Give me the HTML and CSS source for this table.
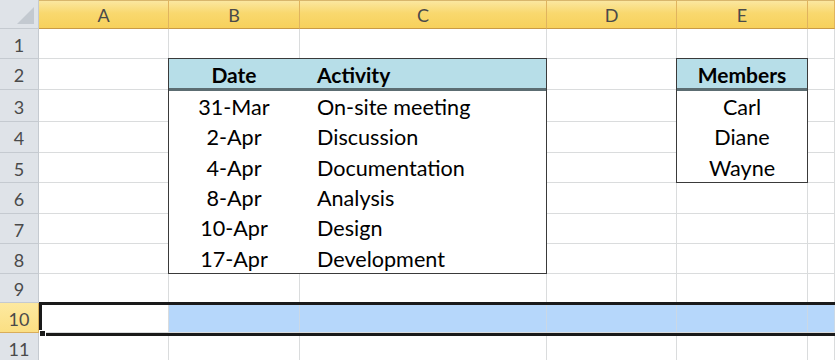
FILE: index.html
```html
<!DOCTYPE html>
<html>
<head>
<meta charset="utf-8">
<link rel="stylesheet" href="styles.css">
</head>
<body>
<div class="sheet">
  <div class="corner"><svg width="38" height="28" viewBox="0 0 38 28"><polygon points="17,24 34,24 34,7" fill="#c3c9d0"/></svg></div>
  <div class="colhead">A</div>
  <div class="colhead">B</div>
  <div class="colhead">C</div>
  <div class="colhead">D</div>
  <div class="colhead">E</div>
  <div class="colhead"></div>

  <div class="rowhead">1</div>
  <div class="cell"></div><div class="cell"></div><div class="cell"></div><div class="cell"></div><div class="cell"></div><div class="cell"></div>

  <div class="rowhead">2</div>
  <div class="cell"></div><div class="cell"></div><div class="cell"></div>

  <div class="rowhead">3</div>
  <div class="cell"></div><div class="cell"></div><div class="cell"></div>

  <div class="rowhead">4</div>
  <div class="cell"></div><div class="cell"></div><div class="cell"></div>

  <div class="rowhead">5</div>
  <div class="cell"></div><div class="cell"></div><div class="cell"></div>

  <div class="rowhead">6</div>
  <div class="cell"></div><div class="cell"></div><div class="cell"></div><div class="cell"></div>

  <div class="rowhead">7</div>
  <div class="cell"></div><div class="cell"></div><div class="cell"></div><div class="cell"></div>

  <div class="rowhead">8</div>
  <div class="cell"></div><div class="cell"></div><div class="cell"></div><div class="cell"></div>

  <div class="rowhead">9</div>
  <div class="cell"></div><div class="cell"></div><div class="cell"></div><div class="cell"></div><div class="cell"></div><div class="cell"></div>

  <div class="rowhead rowhead-active">10</div>
  <div class="cell"></div><div class="cell cell-sel"></div><div class="cell cell-sel"></div><div class="cell cell-sel"></div><div class="cell cell-sel"></div><div class="cell cell-sel"></div>

  <div class="rowhead">11</div>
  <div class="cell"></div><div class="cell"></div><div class="cell"></div><div class="cell"></div><div class="cell"></div><div class="cell"></div>

  <div class="table table-activity">
    <div class="th center">Date</div>
    <div class="th left">Activity</div>
    <div class="td center">31-Mar</div><div class="td left">On-site meeting</div>
    <div class="td center">2-Apr</div><div class="td left">Discussion</div>
    <div class="td center">4-Apr</div><div class="td left">Documentation</div>
    <div class="td center">8-Apr</div><div class="td left">Analysis</div>
    <div class="td center">10-Apr</div><div class="td left">Design</div>
    <div class="td center">17-Apr</div><div class="td left">Development</div>
  </div>

  <div class="table table-members">
    <div class="th center">Members</div>
    <div class="td center">Carl</div>
    <div class="td center">Diane</div>
    <div class="td center">Wayne</div>
  </div>

  <div class="selection"><span class="handle"></span></div>
</div>
</body>
</html>
```

FILE: styles.css
```css
* { box-sizing: border-box; }

html, body {
  margin: 0;
  padding: 0;
  background: #ffffff;
  overflow: hidden;
}

.sheet {
  position: relative;
  display: grid;
  grid-template-columns: 39px 130px 131px 247px 130px 131px minmax(0, 1fr);
  grid-template-rows: 29px 30px 31px 32px 31px 30px 31px 30px 30px 29px 30px 30px;
  width: 100%;
  font-family: Lato, "Liberation Sans", sans-serif;
}

.corner {
  background: #dfe3e8;
  border-right: 1px solid #c5cad0;
  border-bottom: 1px solid #c5cad0;
}
.corner svg { display: block; }

.colhead {
  background: linear-gradient(#fbe7a0 0%, #f9d86e 45%, #f7d15c 100%);
  border-right: 1px solid #e0b45e;
  border-bottom: 1px solid #c99a46;
  border-top: 1px solid #d8b66c;
  color: #4a4a4a;
  font-size: 18px;
  display: flex;
  align-items: center;
  justify-content: center;
  padding-top: 1px;
}

.rowhead {
  grid-column: 1;
  background: #dfe3e8;
  border-right: 1px solid #c5cad0;
  border-bottom: 1px solid #c5cad0;
  color: #4a4a4a;
  font-size: 18px;
  display: flex;
  align-items: center;
  justify-content: center;
  padding-top: 2px;
}
.rowhead-active {
  background: linear-gradient(#fde9a0, #fbdf83);
  border-right: 1px solid #d9ad5a;
  border-bottom: 1px solid #d9ad5a;
  color: #4a4a4a;
}

.cell {
  background: #ffffff;
  border-right: 1px solid #dadcdd;
  border-bottom: 1px solid #dadcdd;
}
.cell-sel {
  background: #b6d7fb;
  border-right: 1px solid #cad8e6;
}

.table {
  margin: -1px 0 0 -1px;
  border: 1px solid #3a3a3a;
  background: #ffffff;
  display: grid;
  font-size: 21.6px;
  color: #000000;
  z-index: 1;
}
.table-activity {
  grid-column: 3 / 5;
  grid-row: 3 / 10;
  grid-template-columns: 130px 1fr;
  grid-template-rows: 32px repeat(6, 1fr);
}
.table-members {
  grid-column: 6 / 7;
  grid-row: 3 / 7;
  grid-template-columns: 1fr;
  grid-template-rows: 32px repeat(3, 1fr);
}

.th {
  background: #b7dee8;
  border-bottom: 3px solid #5c6d72;
  font-weight: 700;
  font-size: 21px;
  display: flex;
  align-items: center;
  padding-top: 1px;
}
.td {
  display: flex;
  align-items: center;
  padding-top: 2px;
}
.center { justify-content: center; }
.left { padding-left: 18px; }

.selection {
  position: absolute;
  grid-column: 2 / 8;
  grid-row: 11 / 12;
  top: -1px;
  bottom: -3px;
  left: 0;
  right: 0;
  border-top: 3px solid #1a1a1a;
  border-bottom: 3px solid #1a1a1a;
  border-left: 3px solid #1a1a1a;
  z-index: 2;
}
.handle {
  position: absolute;
  left: -3px;
  bottom: -4px;
  width: 7px;
  height: 7px;
  background: #1a1a1a;
  border: 1px solid #ffffff;
}
```
